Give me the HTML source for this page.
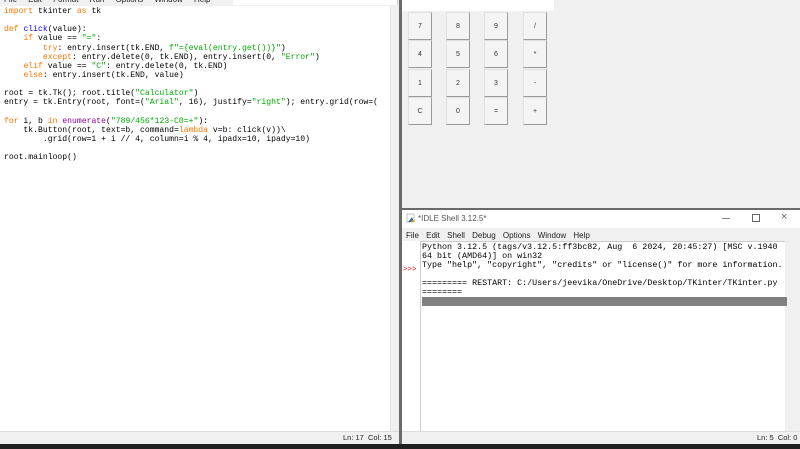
<!DOCTYPE html>
<html><head><meta charset="utf-8"><style>
*{margin:0;padding:0;box-sizing:border-box}
body{width:800px;height:449px;overflow:hidden;background:#f0f0f0;position:relative;font-family:"Liberation Sans",sans-serif}
.abs{position:absolute}
.code{font-family:"Liberation Mono",monospace;font-size:8.1px;line-height:9.125px;white-space:pre;color:#000}
.k{color:#ff7700}.d{color:#0000ff}.s{color:#00aa00}.b{color:#900090}
.btn{position:absolute;width:24px;height:28px;background:#f4f4f4;border:1px solid #e0e0e0;border-right:1px solid #9a9a9a;border-bottom:1px solid #9a9a9a;font-size:7px;color:#333;display:flex;align-items:center;justify-content:center}
.menu{font-size:8px;color:#222}
.sb{font-size:7.5px;color:#222}
</style></head><body>
<div class="abs" style="left:0;top:0;width:400px;height:6px;background:#f0f0f0"></div>
<div class="abs menu" style="left:4px;top:-5px;word-spacing:9px">File Edit Format Run Options Window Help</div>
<div class="abs" style="left:233px;top:0;width:165px;height:5px;background:#fff;border-right:1px solid #ccc"></div>
<div class="abs" style="left:0;top:6px;width:390px;height:425px;background:#fff"></div>
<div class="abs" style="left:390px;top:6px;width:9px;height:425px;background:#f0f0f0;border-left:1px solid #e4e4e4"></div>
<div class="abs" style="left:0;top:431px;width:399px;height:13px;background:#f0f0f0;border-top:1px solid #ddd"></div>
<div class="abs sb" style="left:343px;top:433px">Ln: 17&nbsp; Col: 15</div>
<div class="abs" style="left:399px;top:0;width:3px;height:444px;background:#6a6a6a"></div>
<div class="abs code" style="left:4px;top:7px"><span class="k">import</span> tkinter <span class="k">as</span> tk

<span class="k">def</span> <span class="d">click</span>(value):
    <span class="k">if</span> value == <span class="s">"="</span>:
        <span class="k">try</span>: entry.insert(tk.END, <span class="s">f"={eval(entry.get())}"</span>)
        <span class="k">except</span>: entry.delete(0, tk.END), entry.insert(0, <span class="s">"Error"</span>)
    <span class="k">elif</span> value == <span class="s">"C"</span>: entry.delete(0, tk.END)
    <span class="k">else</span>: entry.insert(tk.END, value)

root = tk.Tk(); root.title(<span class="s">"Calculator"</span>)
entry = tk.Entry(root, font=(<span class="s">"Arial"</span>, 16), justify=<span class="s">"right"</span>); entry.grid(row=(

<span class="k">for</span> i, b <span class="k">in</span> <span class="b">enumerate</span>(<span class="s">"789/456*123-C0=+"</span>):
    tk.Button(root, text=b, command=<span class="k">lambda</span> v=b: click(v))\
        .grid(row=1 + i // 4, column=i % 4, ipadx=10, ipady=10)

root.mainloop()</div>
<div class="abs" style="left:402px;top:0;width:152px;height:11px;background:#fff"></div>
<div class="btn" style="left:408px;top:12px">7</div><div class="btn" style="left:446px;top:12px">8</div><div class="btn" style="left:484px;top:12px">9</div><div class="btn" style="left:523px;top:12px">/</div>
<div class="btn" style="left:408px;top:40px">4</div><div class="btn" style="left:446px;top:40px">5</div><div class="btn" style="left:484px;top:40px">6</div><div class="btn" style="left:523px;top:40px">*</div>
<div class="btn" style="left:408px;top:69px">1</div><div class="btn" style="left:446px;top:69px">2</div><div class="btn" style="left:484px;top:69px">3</div><div class="btn" style="left:523px;top:69px">-</div>
<div class="btn" style="left:408px;top:97px">C</div><div class="btn" style="left:446px;top:97px">0</div><div class="btn" style="left:484px;top:97px">=</div><div class="btn" style="left:523px;top:97px">+</div>
<div class="abs" style="left:402px;top:208px;width:398px;height:2px;background:#6a6a6a"></div>
<div class="abs" style="left:402px;top:210px;width:398px;height:18px;background:#fff"></div>
<svg class="abs" style="left:406px;top:213px" width="10" height="10"><rect x="1" y="1" width="7" height="8" fill="#fff" stroke="#999" stroke-width=".6"/><path d="M2 9 L6 4 L8 9Z" fill="#3a6fb0"/><path d="M5 9 L8 6 L9 9Z" fill="#e0b020"/></svg>
<div class="abs" style="left:418px;top:214px;font-size:8px;color:#555">*IDLE Shell 3.12.5*</div>
<div class="abs" style="left:722px;top:218px;width:8px;height:1px;background:#888"></div>
<div class="abs" style="left:752px;top:214px;width:8px;height:8px;border:1px solid #666"></div>
<div class="abs" style="left:781px;top:211px;font-size:11px;color:#666">×</div>
<div class="abs menu" style="left:406px;top:231px;word-spacing:5px;font-size:8px">File Edit Shell Debug Options Window Help</div>
<div class="abs" style="left:420px;top:241px;width:365px;height:190px;background:#fff;border-left:1px solid #ccc;border-top:1px solid #ccc"></div>
<div class="abs" style="left:402px;top:241px;width:18px;height:190px;background:#fff"></div>
<div class="abs" style="left:785px;top:241px;width:15px;height:190px;background:#f0f0f0"></div>
<div class="abs code" style="left:403px;top:266px;color:#c00;font-size:7.5px">&gt;&gt;&gt;</div>
<div class="abs code" style="left:422px;top:243px;font-size:8.35px;line-height:9.1px">Python 3.12.5 (tags/v3.12.5:ff3bc82, Aug  6 2024, 20:45:27) [MSC v.1940
64 bit (AMD64)] on win32
Type "help", "copyright", "credits" or "license()" for more information.

========= RESTART: C:/Users/jeevika/OneDrive/Desktop/TKinter/TKinter.py
========</div>
<div class="abs" style="left:422px;top:297px;width:365px;height:9px;background:#808080"></div>
<div class="abs" style="left:402px;top:431px;width:398px;height:13px;background:#f0f0f0;border-top:1px solid #ddd"></div>
<div class="abs sb" style="left:757px;top:433px">Ln: 5&nbsp; Col: 0</div>
<div class="abs" style="left:0;top:444px;width:800px;height:5px;background:#202020"></div>
</body></html>
